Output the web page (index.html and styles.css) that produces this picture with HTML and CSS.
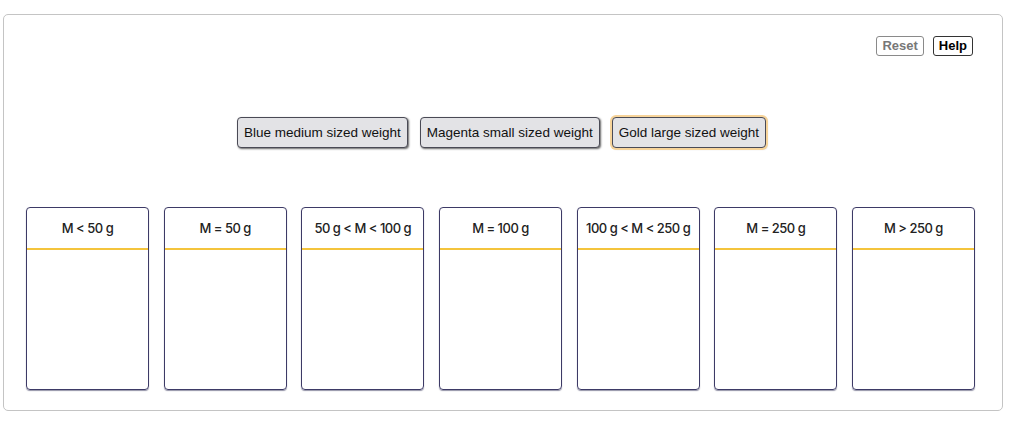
FILE: index.html
```html
<!DOCTYPE html>
<html>
<head>
<meta charset="utf-8">
<link rel="stylesheet" href="styles.css">
</head>
<body>
<div class="panel">
  <div class="toolbar">
    <button class="tool-btn reset">Reset</button>
    <button class="tool-btn help">Help</button>
  </div>
  <div class="weights">
    <button class="weight">Blue medium sized weight</button>
    <button class="weight">Magenta small sized weight</button>
    <button class="weight selected">Gold large sized weight</button>
  </div>
  <div class="bins">
    <div class="bin"><div class="bin-head">M &lt; 50 g</div></div>
    <div class="bin"><div class="bin-head">M = 50 g</div></div>
    <div class="bin"><div class="bin-head">50 g &lt; M &lt; 100 g</div></div>
    <div class="bin"><div class="bin-head">M = 100 g</div></div>
    <div class="bin"><div class="bin-head">100 g &lt; M &lt; 250 g</div></div>
    <div class="bin"><div class="bin-head">M = 250 g</div></div>
    <div class="bin"><div class="bin-head">M &gt; 250 g</div></div>
  </div>
</div>
</body>
</html>
```
FILE: styles.css
```css
html, body {
  margin: 0;
  padding: 0;
  background: #ffffff;
}
body {
  font-family: "Liberation Sans", Arial, sans-serif;
}
.panel {
  box-sizing: border-box;
  margin: 14px 0 0 3px;
  width: 1000px;
  height: 397px;
  border: 1px solid #c4c4c4;
  border-radius: 5px;
  padding: 21px 25px 0 22px;
}
.toolbar {
  display: flex;
  justify-content: flex-end;
  gap: 9px;
  height: 20px;
  margin-right: 4px;
}
.tool-btn {
  box-sizing: border-box;
  height: 20px;
  padding: 0 5px;
  font-family: "Liberation Sans", Arial, sans-serif;
  font-size: 13px;
  font-weight: bold;
  background: #ffffff;
  border-radius: 3px;
  line-height: 18px;
}
.reset {
  color: #777777;
  border: 1px solid #8a8a8a;
}
.help {
  color: #000000;
  border: 1px solid #333333;
}
.weights {
  display: flex;
  justify-content: center;
  gap: 12px;
  margin-top: 61px;
}
.weight {
  box-sizing: border-box;
  height: 31px;
  padding: 0 6px;
  font-family: "Liberation Sans", Arial, sans-serif;
  font-size: 13.5px;
  color: #111111;
  background: #e3e3e6;
  border: 1px solid #4a4a55;
  border-radius: 4px;
  box-shadow: 1px 1px 2px rgba(0, 0, 0, 0.6);
}
.weight.selected {
  border: 1px solid #4a4a55;
  box-shadow: 0 0 0 2px #f7d49a, 1px 1px 2px rgba(0, 0, 0, 0.4);
}
.bins {
  display: flex;
  gap: 14.67px;
  margin-top: 59px;
}
.bin {
  box-sizing: border-box;
  flex: 0 0 123px;
  height: 183px;
  border: 1px solid #3d3a66;
  border-radius: 4px;
  box-shadow: 0 1px 1px rgba(40, 40, 80, 0.5);
}
.bin-head {
  height: 40px;
  border-bottom: 2px solid #f4c43c;
  display: flex;
  align-items: center;
  justify-content: center;
  font-family: Inter, "Liberation Sans", sans-serif;
  font-size: 13px;
  font-weight: 500;
  letter-spacing: -0.5px;
  color: #222222;
}
```
